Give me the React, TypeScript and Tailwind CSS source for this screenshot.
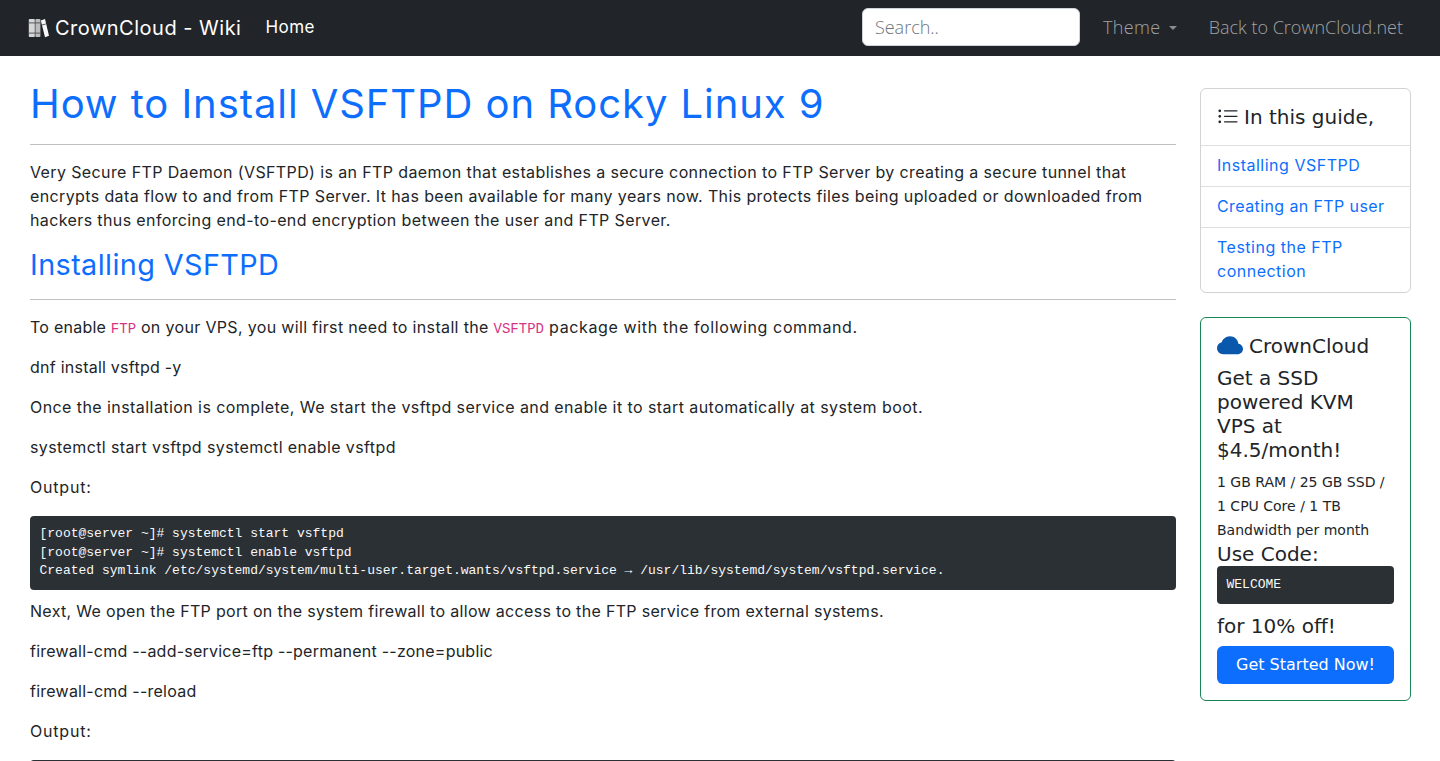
const MONT = "font-['Inter','Liberation_Sans',sans-serif]";

function Logo() {
  return (
    <svg width="21" height="21" viewBox="0 0 21 21" className="shrink-0">
      <rect x="0.8" y="2" width="6" height="18" rx="0.8" fill="#d6d6d6" />
      <rect x="7.4" y="2" width="5" height="18" rx="0.8" fill="#bcbcbc" />
      <path d="M12.8 3.4 L17 2 L21 18.8 L17 20.2 Z" fill="#f8f8f8" />
      <rect x="0.8" y="5.4" width="11.6" height="1" fill="#55585c" />
      <rect x="0.8" y="15.6" width="11.6" height="1" fill="#55585c" />
      <path d="M14 7.6 L18 6.4 L18.2 7.2 L14.2 8.4 Z" fill="#55585c" />
    </svg>
  );
}

function Cloud() {
  return (
    <svg width="26" height="26" viewBox="0 0 16 16" fill="#0a58ab" className="shrink-0">
      <path d="M4.406 3.342A5.53 5.53 0 0 1 8 2c2.69 0 4.923 2 5.166 4.579C14.758 6.804 16 8.137 16 9.773 16 11.569 14.502 13 12.687 13H3.781C1.708 13 0 11.366 0 9.318c0-1.763 1.266-3.223 2.942-3.593.143-.863.698-1.723 1.464-2.383z" />
    </svg>
  );
}

function ListUl() {
  return (
    <svg width="22" height="22" viewBox="0 0 16 16" fill="#212529" className="shrink-0">
      <path d="M5 11.5a.5.5 0 0 1 .5-.5h9a.5.5 0 0 1 0 1h-9a.5.5 0 0 1-.5-.5zm0-4a.5.5 0 0 1 .5-.5h9a.5.5 0 0 1 0 1h-9a.5.5 0 0 1-.5-.5zm0-4a.5.5 0 0 1 .5-.5h9a.5.5 0 0 1 0 1h-9a.5.5 0 0 1-.5-.5zm-3 1a1 1 0 1 0 0-2 1 1 0 0 0 0 2zm0 4a1 1 0 1 0 0-2 1 1 0 0 0 0 2zm0 4a1 1 0 1 0 0-2 1 1 0 0 0 0 2z" />
    </svg>
  );
}

function P({ children, className = "" }: { children: React.ReactNode; className?: string }) {
  return <p className={`-mt-px mb-[17px] text-[16px] leading-6 text-[#212529] ${className}`}>{children}</p>;
}

function Code({ children }: { children: React.ReactNode }) {
  return <code className="font-['Liberation_Mono',monospace] text-[14px] leading-none tracking-normal text-[#d63384]">{children}</code>;
}

function Pre({ children, className = "" }: { children?: React.ReactNode; className?: string }) {
  return (
    <pre className={`font-['Liberation_Mono',monospace] text-[13px] leading-[18.57px] text-[#f8f9fa] bg-[#2b3035] rounded px-[9.5px] overflow-hidden ${className}`}>
      {children}
    </pre>
  );
}

export default function App() {
  return (
    <div className={`${MONT} h-[761px] overflow-hidden bg-white`}>
      <nav className="h-14 bg-[#212529] flex items-center pl-[28px] pr-[37px] pb-px">
        <a className="flex items-center gap-[6px] text-white text-[20px] tracking-[0.5px]">
          <Logo />
          <span>CrownCloud - Wiki</span>
        </a>
        <a className="ml-6 text-white text-[17px] tracking-[0.45px]">Home</a>
        <div className="ml-auto flex items-center font-['Open_Sans',sans-serif] font-light text-[18px]">
          <div className="w-[218px] h-[38px] -mt-px bg-white rounded-md border border-[#ced4da] flex items-center px-3 text-[#6c757d]">
            Search..
          </div>
          <div className="ml-[23px] flex items-center text-[#a1a3a5] tracking-[0.4px]">
            Theme
            <span className="ml-2 w-0 h-0 border-x-[4.8px] border-x-transparent border-t-[4.8px] border-t-[#8b8d90]" />
          </div>
          <div className="ml-8 text-[#a1a3a5]">Back to CrownCloud.net</div>
        </div>
      </nav>
      <div className="flex gap-6 pl-[30px] pr-[29px]">
        <main className="flex-1 min-w-0">
          <h1 className="mt-6 text-[40px] leading-12 text-[#0d6efd] tracking-[0.93px]">How to Install VSFTPD on Rocky Linux 9</h1>
          <hr className="mt-4 mb-4 border-0 h-px bg-[#bfc0c1]" />
          <P className="tracking-[0.38px]">
            Very Secure FTP Daemon (VSFTPD) is an FTP daemon that establishes a secure connection to FTP Server by creating a secure tunnel that encrypts data flow to and from FTP Server. It has been available for many years now. This protects files being uploaded or downloaded from hackers thus enforcing end-to-end encryption between the user and FTP Server.
          </P>
          <h2 className="-mt-px text-[28.8px] leading-[34px] text-[#0d6efd] tracking-[0.4px]">Installing VSFTPD</h2>
          <hr className="mt-[17px] mb-4 border-0 h-px bg-[#bfc0c1]" />
          <P>
            <span className="tracking-[0.24px]">To enable </span>
            <Code>FTP</Code>
            <span className="tracking-[0.34px]"> on your VPS, you will first need to install the </span>
            <Code>VSFTPD</Code>
            <span className="tracking-[0.63px]"> package with the following command.</span>
          </P>
          <P className="tracking-[0.24px]">dnf install vsftpd -y</P>
          <P className="tracking-[0.43px]">Once the installation is complete, We start the vsftpd service and enable it to start automatically at system boot.</P>
          <P className="tracking-[0.39px]">systemctl start vsftpd systemctl enable vsftpd</P>
          <P className="tracking-[0.8px]">Output:</P>
          <Pre className="py-[9.25px] mb-[10px]">{`[root@server ~]# systemctl start vsftpd
[root@server ~]# systemctl enable vsftpd
Created symlink /etc/systemd/system/multi-user.target.wants/vsftpd.service → /usr/lib/systemd/system/vsftpd.service.`}</Pre>
          <P className="tracking-[0.32px]">Next, We open the FTP port on the system firewall to allow access to the FTP service from external systems.</P>
          <P className="tracking-[0.23px]">firewall-cmd --add-service=ftp --permanent --zone=public</P>
          <P className="tracking-[0.24px]">firewall-cmd --reload</P>
          <P className="tracking-[0.8px]">Output:</P>
          <Pre className="h-[38px]" />
        </main>
        <aside className="w-[211px] shrink-0 pt-8 flex flex-col gap-6">
          <div className="border border-[#d2d3d4] rounded-md">
            <div className="h-14 px-4 flex items-center gap-[5px] font-['DejaVu_Sans',sans-serif] text-[20px] text-[#212529]">
              <ListUl />
              <span>In this guide,</span>
            </div>
            <ul className="text-[16px] leading-6 text-[#0d6efd]">
              <li className="border-t border-[#dedfe0] px-4 pt-[7px] pb-[9px] tracking-[0.5px]">Installing VSFTPD</li>
              <li className="border-t border-[#dedfe0] px-4 pt-[7px] pb-[9px] tracking-[0.4px]">Creating an FTP user</li>
              <li className="border-t border-[#dedfe0] px-4 pt-[7px] pb-[9px] tracking-[0.5px]">Testing the FTP connection</li>
            </ul>
          </div>
          <div className="border border-[#198754] rounded-md px-4 pt-4 pb-4 font-['DejaVu_Sans',sans-serif] text-[#212529]">
            <div className="h-6 flex items-center gap-[6px] text-[20px] leading-6">
              <Cloud />
              <span>CrownCloud</span>
            </div>
            <div className="mt-2 text-[20px] leading-6">Get a SSD powered KVM VPS at $4.5/month!</div>
            <div className="mt-2 text-[14px] leading-6">1 GB RAM / 25 GB SSD / 1 CPU Core / 1 TB Bandwidth per month</div>
            <div className="text-[20px] leading-6">Use Code:</div>
            <Pre className="py-[9.7px]">WELCOME</Pre>
            <div className="mt-2.5 text-[20px] leading-6">for 10% off!</div>
            <div className="mt-2 h-[38px] rounded-md bg-[#0d6efd] text-white text-[16px] flex items-center justify-center">Get Started Now!</div>
          </div>
        </aside>
      </div>
    </div>
  );
}
